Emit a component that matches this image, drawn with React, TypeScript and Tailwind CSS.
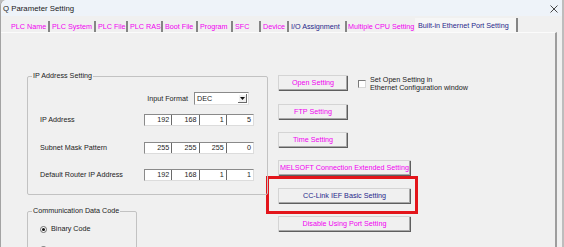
import React from 'react';

const tabs = [
  { label: 'PLC Name', w: 'w-[41px]', color: 'text-[#f000f0]' },
  { label: 'PLC System', w: 'w-[46px]', color: 'text-[#f000f0]' },
  { label: 'PLC File', w: 'w-[32px]', color: 'text-[#f000f0]' },
  { label: 'PLC RAS', w: 'w-[35px]', color: 'text-[#f000f0]' },
  { label: 'Boot File', w: 'w-[35px]', color: 'text-[#f000f0]' },
  { label: 'Program', w: 'w-[35px]', color: 'text-[#f000f0]' },
  { label: 'SFC', w: 'w-[28px]', color: 'text-[#f000f0]' },
  { label: 'Device', w: 'w-[28px]', color: 'text-[#f000f0]' },
  { label: 'I/O Assignment', w: 'w-[58px]', color: 'text-[#26268a]' },
];

const ipRows = [
  { label: 'IP Address', values: ['192', '168', '1', '5'], mt: 'mt-[9px]' },
  { label: 'Subnet Mask Pattern', values: ['255', '255', '255', '0'], mt: 'mt-[16px]' },
  { label: 'Default Router IP Address', values: ['192', '168', '1', '1'], mt: 'mt-[15px]' },
];

// classic 3D push button
const btn =
  'h-[16px] shrink-0 flex items-center justify-center bg-[#f0f0f0] shadow-[inset_1px_1px_0_#d4d4d4,inset_-1px_-1px_0_#5e5e5e,inset_-2px_-2px_0_#a8a8a8] text-[7.2px] leading-[8px]';

const Radio: React.FC<{ checked?: boolean; label?: string; mt: string }> = ({ checked, label, mt }) => (
  <div className={`h-[8px] flex items-center gap-[4px] pl-[12px] ${mt}`}>
    <span className="w-[7px] h-[7px] rounded-full bg-white border border-[#6b6b6b] flex items-center justify-center">
      {checked && <span className="w-[3px] h-[3px] rounded-full bg-[#111]" />}
    </span>
    {label && <span>{label}</span>}
  </div>
);

const GroupBox: React.FC<{ title: string; className: string; children: React.ReactNode }> = ({ title, className, children }) => (
  <div className={`relative shrink-0 border border-[#c2c2c2] rounded-[2px] ${className}`}>
    <span className="absolute top-[-5px] left-[4px] px-[1px] bg-[#f0f0f0] leading-[8px] whitespace-nowrap">{title}</span>
    {children}
  </div>
);

const App: React.FC = () => {
  return (
    <div className="w-[564px] h-[247px] overflow-hidden bg-[#bdbdbd] flex font-['Liberation_Sans',Arial,sans-serif] text-[#1c1c1c]">
      <div className="w-[562px] h-full bg-[#f0f0f0] border-l border-[#a3a3a3] rounded-tl-[6px] flex flex-col overflow-hidden">
        {/* title bar */}
        <div className="h-[16px] shrink-0 bg-[#eef3f9] flex items-center justify-between pl-[2px] pr-[4px]">
          <span className="text-[7.8px] leading-[9px] text-[#1a1a1a]">Q Parameter Setting</span>
          <svg width="8" height="8" viewBox="0 0 8 8" className="mt-[1px]">
            <path d="M0.5 0.5L7.5 7.5M7.5 0.5L0.5 7.5" stroke="#333" strokeWidth="0.9" />
          </svg>
        </div>

        {/* tab strip */}
        <div className="h-[16px] shrink-0 flex items-end pl-[8px] text-[7.2px] leading-[8px]">
          {tabs.map((t) => (
            <div key={t.label} className={`${t.w} h-[11px] flex items-center pl-[2px] border-r-2 border-[#858585] whitespace-nowrap ${t.color}`}>
              {t.label}
            </div>
          ))}
          <div className="w-[68px] h-[11px] flex items-center pl-[1px] whitespace-nowrap text-[#f000f0]">Multiple CPU Setting</div>
          <div className="w-[103px] h-[14px] flex items-center pl-[3px] pt-[1px] bg-[#f6f6f6] border-r-2 border-[#858585] whitespace-nowrap text-[#26268a]">
            Built-in Ethernet Port Setting
          </div>
        </div>

        {/* tab page */}
        <div className="flex-1 mr-[5px] border-t border-[#fbfbfb] border-r-2 border-r-[#9d9d9d] flex text-[7.2px] leading-[8px] overflow-hidden">
          {/* left column */}
          <div className="ml-[26px] flex flex-col shrink-0">
            <GroupBox title="IP Address Setting" className="mt-[43px] w-[241px] h-[119px]">
              <div className="mt-[15px] flex items-center justify-end gap-[6px] mr-[18px]">
                <span>Input Format</span>
                <div className="w-[55px] h-[13px] bg-white border border-[#8a8a8a] border-r-[#e0e0e0] border-b-[#e0e0e0] flex items-center justify-between pl-[2px] pr-[1px]">
                  <span>DEC</span>
                  <span className="w-[9px] h-[9px] bg-[#f0f0f0] shadow-[inset_-1px_-1px_0_#6a6a6a,inset_1px_1px_0_#ffffff] flex items-center justify-center">
                    <svg width="5" height="3" viewBox="0 0 5 3">
                      <path d="M0 0H5L2.5 3Z" fill="#111" />
                    </svg>
                  </span>
                </div>
              </div>
              {ipRows.map((r) => (
                <div key={r.label} className={`grid grid-cols-[116px_110px] items-center ${r.mt}`}>
                  <span className="pl-[12px] whitespace-nowrap">{r.label}</span>
                  <div className="h-[12px] flex border-t border-l border-[#8a8a8a] border-b border-r border-b-[#dcdcdc] border-r-[#dcdcdc] bg-white">
                    {r.values.map((v, i) => (
                      <span
                        key={i}
                        className={`flex-1 flex items-center justify-end pr-[2px] ${i < 3 ? 'border-r border-[#6a6a6a]' : ''}`}
                      >
                        {v}
                      </span>
                    ))}
                  </div>
                </div>
              ))}
            </GroupBox>

            <GroupBox title="Communication Data Code" className="mt-[16px] w-[110px] h-[80px]">
              <Radio checked label="Binary Code" mt="mt-[13px]" />
              {/* second option is below the visible edge; only the circle top shows */}
              <Radio mt="mt-[12px]" />
            </GroupBox>
          </div>

          {/* right column */}
          <div className="ml-[10px] mt-[42px] flex flex-col">
            <div className="flex items-start">
              <div className={`${btn} w-[70px] text-[#f000f0]`}>Open Setting</div>
              <div className="ml-[10px] flex items-start gap-[4px]">
                <span className="mt-[5px] w-[8px] h-[8px] bg-white border border-[#7a7a7a] border-r-[#d8d8d8] border-b-[#d8d8d8]" />
                <div className="mt-[1px] leading-[8px] whitespace-nowrap">
                  <div>Set Open Setting in</div>
                  <div>Ethernet Configuration window</div>
                </div>
              </div>
            </div>
            <div className={`${btn} w-[70px] mt-[12px] text-[#f000f0]`}>FTP Setting</div>
            <div className={`${btn} w-[70px] mt-[12px] text-[#f000f0]`}>Time Setting</div>
            <div className={`${btn} w-[133px] mt-[12px] text-[#f000f0]`}>MELSOFT Connection Extended Setting</div>
            <div className="ml-[-12px] shrink-0 w-[152px] h-[38px] border-[3px] border-[#e3151b] pl-[9px] pt-[9px]">
              <div className={`${btn} w-[133px] text-[#26268a]`}>CC-Link IEF Basic Setting</div>
            </div>
            <div className={`${btn} w-[133px] mt-[2px] text-[#f000f0]`}>Disable Using Port Setting</div>
          </div>
        </div>
      </div>
    </div>
  );
};

export default App;
